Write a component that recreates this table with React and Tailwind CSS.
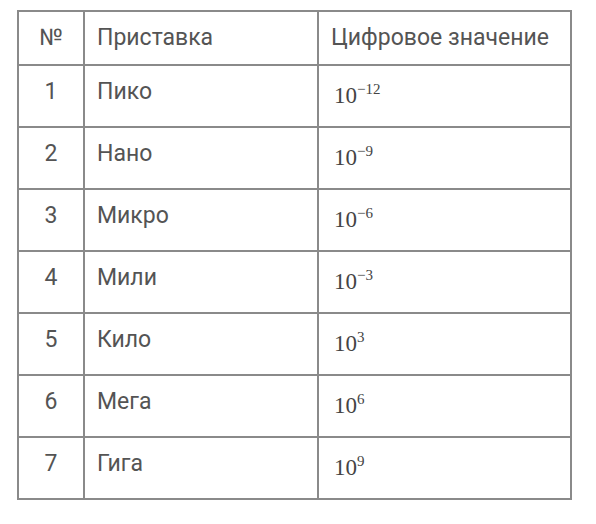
import React from "react";

const rows = [
  ["1", "Пико", "−12"],
  ["2", "Нано", "−9"],
  ["3", "Микро", "−6"],
  ["4", "Мили", "−3"],
  ["5", "Кило", "3"],
  ["6", "Мега", "6"],
  ["7", "Гига", "9"],
];

export default function App() {
  return (
    <div className="w-[596px] h-[524px] bg-white pt-[10px] pl-[17px] font-['Roboto',sans-serif] text-[23px] leading-[27px] text-[#545454]">
      <table className="border-collapse w-[553px] table-fixed">
        <colgroup>
          <col className="w-[66px]" />
          <col className="w-[234px]" />
          <col className="w-[253px]" />
        </colgroup>
        <thead>
          <tr className="h-[54px]">
            <th className="border-2 border-[#8a8a8a] align-top pt-[12px] font-normal text-center">№</th>
            <th className="border-2 border-[#8a8a8a] align-top pt-[12px] pl-[12px] font-normal text-left">Приставка</th>
            <th className="border-2 border-[#8a8a8a] align-top pt-[12px] pl-[12px] font-normal text-left">Цифровое значение</th>
          </tr>
        </thead>
        <tbody>
          {rows.map(([n, name, exp]) => (
            <tr key={n} className="h-[62px]">
              <td className="border-2 border-[#8a8a8a] align-top pt-[12px] text-center">{n}</td>
              <td className="border-2 border-[#8a8a8a] align-top pt-[12px] pl-[12px]">{name}</td>
              <td className="border-2 border-[#8a8a8a] align-top pt-[16px] pl-[15px]">
                <span className="font-['Liberation_Serif',serif] text-[23px] text-[#444]">
                  10
                  <sup className="text-[15px] relative top-[-9px]">{exp}</sup>
                </span>
              </td>
            </tr>
          ))}
        </tbody>
      </table>
    </div>
  );
}
